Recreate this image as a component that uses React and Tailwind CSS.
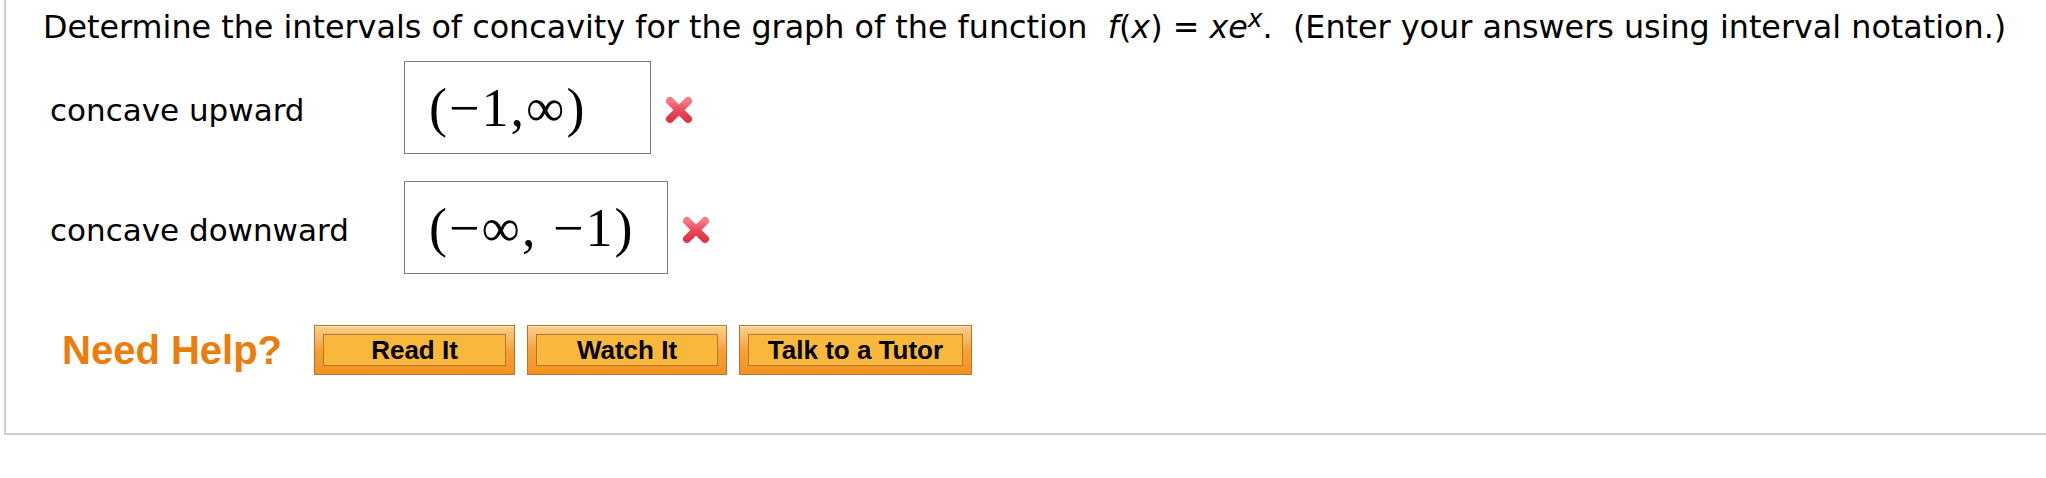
import React from 'react';

const sans = { fontFamily: '"DejaVu Sans", Verdana, sans-serif' };

const RedX = () => (
  <svg width="32" height="30" viewBox="0 0 32 30" className="shrink-0">
    <defs>
      <linearGradient id="xg" x1="0" y1="0" x2="0" y2="1">
        <stop offset="0" stopColor="#f57a86" />
        <stop offset="0.5" stopColor="#ec4a5a" />
        <stop offset="1" stopColor="#de3647" />
      </linearGradient>
    </defs>
    <g stroke="url(#xg)" strokeWidth="8" strokeLinecap="round">
      <line x1="7" y1="6" x2="25" y2="24" />
      <line x1="25" y1="6" x2="7" y2="24" />
    </g>
  </svg>
);

const AnswerRow = ({ label, value, boxWidth, className }) => (
  <div className={`flex items-center ${className}`}>
    <div className="w-[361px] pl-[7px] pt-[6px] text-[31px] text-black" style={sans}>
      {label}
    </div>
    <div
      className={`${boxWidth} h-[93px] border border-[#7a7a7a] bg-white flex items-center pl-[24px] text-[54px] leading-none text-black tracking-[2px]`}
      style={{ fontFamily: '"Liberation Serif", "Times New Roman", serif' }}
    >
      {value}
    </div>
    <div className="ml-[12px] pt-[4px]">
      <RedX />
    </div>
  </div>
);

const HelpButton = ({ label, width }) => (
  <div
    className={`${width} h-[50px] border border-[#b5742e] bg-gradient-to-b from-[#fcd08e] via-[#f6a035] to-[#f3921f] p-[8px] shadow-[inset_0_1px_0_#fde4bb]`}
  >
    <div
      className="h-full border border-[#b07a34] bg-[#f9b83b] flex items-center justify-center text-[26px] font-bold text-black"
      style={{ fontFamily: '"Liberation Sans", Arial, sans-serif' }}
    >
      {label}
    </div>
  </div>
);

export default function App() {
  return (
    <div className="w-[2046px] h-[478px] bg-white overflow-hidden">
      <div className="ml-[4px] h-[435px] border-l-2 border-b-2 border-[#cfcfcf] pl-[37px]">
        {/* Question */}
        <div className="h-[54px] flex items-center text-[31.8px] text-black whitespace-nowrap" style={sans}>
          <span>
            Determine the intervals of concavity for the graph of the function&nbsp;&nbsp;
            <i>f</i>(<i>x</i>) = <i>xe</i>
            <sup className="text-[25px] relative -top-[11px]"><i>x</i></sup>.&nbsp;&nbsp;(Enter your answers using
            interval notation.)
          </span>
        </div>

        <AnswerRow
          className="mt-[7px]"
          label="concave upward"
          value="(−1,∞)"
          boxWidth="w-[247px]"
        />
        <AnswerRow
          className="mt-[27px]"
          label="concave downward"
          value="(−∞, −1)"
          boxWidth="w-[264px]"
        />

        {/* Help */}
        <div className="mt-[46px] flex items-center">
          <div
            className="w-[271px] pl-[19px] text-[40px] font-bold text-[#ec7d0c]"
            style={{ fontFamily: '"Liberation Sans", Arial, sans-serif' }}
          >
            Need Help?
          </div>
          <div className="flex gap-[12px]">
            <HelpButton label="Read It" width="w-[201px]" />
            <HelpButton label="Watch It" width="w-[200px]" />
            <HelpButton label="Talk to a Tutor" width="w-[233px]" />
          </div>
        </div>
      </div>
    </div>
  );
}
